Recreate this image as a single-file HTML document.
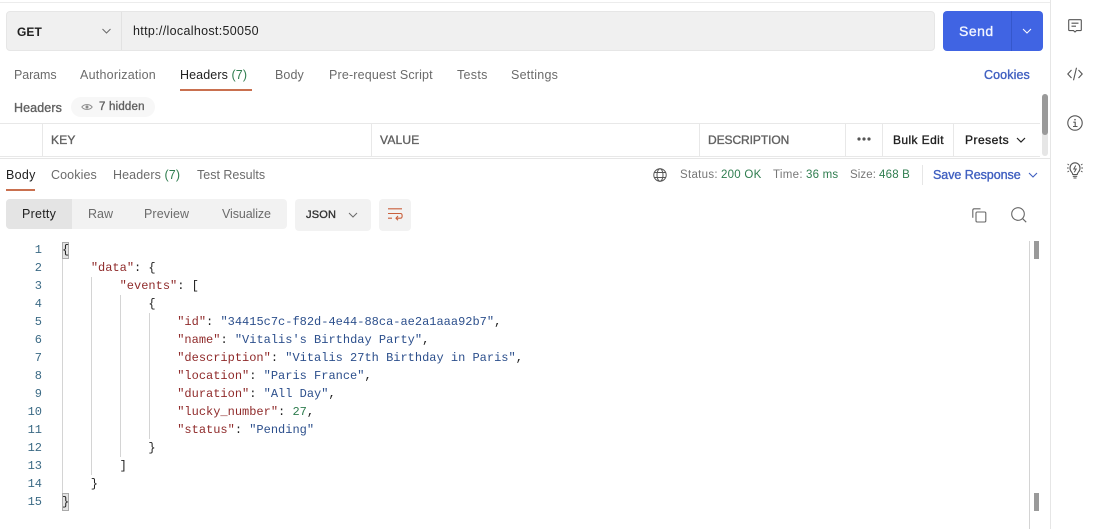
<!DOCTYPE html>
<html><head><meta charset="utf-8"><style>
html,body{margin:0;padding:0;background:#fff}
body{position:relative;width:1097px;height:529px;overflow:hidden;font-family:"Liberation Sans",sans-serif;font-size:12.5px;letter-spacing:.1px;color:#6b6b6b}
.a{position:absolute;white-space:nowrap;line-height:16px}
.r{position:absolute}
.g{color:#2f7d4f}
.d{color:#212121}
.b{font-weight:bold}
.m{-webkit-text-stroke:.35px currentColor}
svg{position:absolute;fill:none;overflow:visible}
.code{position:absolute;left:62px;top:241px;font-family:"Liberation Mono",monospace;font-size:12px;letter-spacing:0;line-height:18px;color:#212121;white-space:pre}
.nums{position:absolute;left:10px;width:32px;top:241px;text-align:right;font-family:"Liberation Mono",monospace;font-size:12px;letter-spacing:0;line-height:18px;color:#3b6a85;white-space:pre}
.k{color:#8f2a2a}.s{color:#2c4f8c}.n{color:#2f7d4f}
</style></head><body>
<!-- top line -->
<div class="r" style="left:0;top:2px;width:1050px;height:1px;background:#ececec"></div>
<div class="r" style="left:1050px;top:0;width:1px;height:529px;background:#e6e6e6"></div>
<!-- URL bar -->
<div class="r" style="left:6px;top:11px;width:929px;height:40px;background:#f0f0f0;border:1px solid #e6e6e6;box-sizing:border-box;border-radius:4px"></div>
<div class="r" style="left:121px;top:12px;width:1px;height:38px;background:#e2e2e2"></div>
<div class="a b" style="left:17px;top:24px;color:#212121;font-size:12px">GET</div>
<svg style="left:101px;top:28px" width="11" height="7"><path d="M1.500 1l4 4 4-4" stroke="#6b6b6b"/></svg>
<div class="a" style="left:133px;top:23px;color:#212121;font-size:12.5px;letter-spacing:.32px">http://localhost:50050</div>
<!-- send -->
<div class="r" style="left:943px;top:11px;width:100px;height:40px;background:#4064e3;border-radius:4px"></div>
<div class="r" style="left:1011px;top:11px;width:1px;height:40px;background:#3557cc"></div>
<div class="a m" style="left:959px;top:23px;color:#f2f5ff;font-size:14px;letter-spacing:.5px">Send</div>
<svg style="left:1022px;top:28px" width="11" height="7"><path d="M1 1l4 4 4-4" stroke="#fff"/></svg>
<!-- request tabs -->
<div class="a" style="left:14px;top:67px;letter-spacing:-.1px">Params</div>
<div class="a" style="left:80px;top:67px;letter-spacing:.23px">Authorization</div>
<div class="a d" style="left:180px;top:67px">Headers <span class="g">(7)</span></div>
<div class="r" style="left:180px;top:89px;width:72px;height:2px;background:#c9704f"></div>
<div class="a" style="left:275px;top:67px">Body</div>
<div class="a" style="left:329px;top:67px;letter-spacing:.17px">Pre-request Script</div>
<div class="a" style="left:457px;top:67px;letter-spacing:.3px">Tests</div>
<div class="a" style="left:511px;top:67px;letter-spacing:.25px">Settings</div>
<div class="a m" style="left:984px;top:67px;color:#3f5fc0;font-size:12.5px">Cookies</div>
<!-- headers row -->
<div class="a m" style="left:14px;top:100px;font-size:12.5px;color:#616161">Headers</div>
<div class="r" style="left:71px;top:97px;width:84px;height:20px;border-radius:10px;background:#f7f7f7"></div>
<svg style="left:81px;top:103px" width="12" height="8"><path d="M.8 4C3 .8 9 .8 11.200 4 9 7.200 3 7.200.8 4z" stroke="#8a8a8a"/><circle cx="6" cy="4" r="1.500" fill="#8a8a8a"/></svg>
<div class="a m" style="left:99px;top:99px;font-size:11.5px;color:#616161;letter-spacing:.2px">7 hidden</div>
<!-- table -->
<div class="r" style="left:0;top:123px;width:1040px;height:1px;background:#e8e8e8"></div>
<div class="r" style="left:0;top:156px;width:1040px;height:1px;background:#e8e8e8"></div>
<div class="r" style="left:0;top:158px;width:1050px;height:1px;background:#e6e6e6"></div>
<div class="r" style="left:42px;top:124px;width:1px;height:33px;background:#e8e8e8"></div>
<div class="r" style="left:371px;top:124px;width:1px;height:33px;background:#e8e8e8"></div>
<div class="r" style="left:699px;top:124px;width:1px;height:33px;background:#e8e8e8"></div>
<div class="r" style="left:845px;top:124px;width:1px;height:33px;background:#e8e8e8"></div>
<div class="r" style="left:882px;top:124px;width:1px;height:33px;background:#e8e8e8"></div>
<div class="r" style="left:953px;top:124px;width:1px;height:33px;background:#e8e8e8"></div>
<div class="a m" style="left:51px;top:132px;font-size:12px;color:#616161;letter-spacing:.2px">KEY</div>
<div class="a m" style="left:380px;top:132px;font-size:12px;color:#616161;letter-spacing:.2px">VALUE</div>
<div class="a m" style="left:708px;top:132px;font-size:12px;color:#616161;letter-spacing:-.07px">DESCRIPTION</div>
<svg style="left:857px;top:137px" width="14" height="4"><circle cx="2" cy="2" r="1.600" fill="#555"/><circle cx="7" cy="2" r="1.600" fill="#555"/><circle cx="12" cy="2" r="1.600" fill="#555"/></svg>
<div class="a m d" style="left:893px;top:132px;font-size:12px;letter-spacing:.4px">Bulk Edit</div>
<div class="a m d" style="left:965px;top:132px;font-size:12px;letter-spacing:.5px">Presets</div>
<svg style="left:1016px;top:137px" width="11" height="7"><path d="M1 1l4 4 4-4" stroke="#212121" stroke-width="1.200"/></svg>
<!-- scrollbar -->
<div class="r" style="left:1042px;top:94px;width:6px;height:62px;background:#e6e6e6;border-radius:3px"></div>
<div class="r" style="left:1042px;top:94px;width:6px;height:41px;background:#9a9a9a;border-radius:3px"></div>
<!-- response tabs -->
<div class="a d" style="left:6px;top:167px;letter-spacing:.3px">Body</div>
<div class="r" style="left:6px;top:189px;width:29px;height:2px;background:#c9704f"></div>
<div class="a" style="left:51px;top:167px">Cookies</div>
<div class="a" style="left:113px;top:167px">Headers <span class="g">(7)</span></div>
<div class="a" style="left:197px;top:167px;letter-spacing:0">Test Results</div>
<!-- status -->
<svg style="left:653px;top:168px" width="14" height="14" stroke="#555" stroke-width="1"><circle cx="7" cy="7" r="6.200"/><ellipse cx="7" cy="7" rx="3" ry="6.200"/><path d="M1.300 4.500h11.400M1.300 9.500h11.400"/></svg>
<div class="a" style="left:680px;top:167px;font-size:11.5px;color:#777;letter-spacing:.3px">Status:</div>
<div class="a g" style="left:721px;top:167px;font-size:11.5px;letter-spacing:.25px">200 OK</div>
<div class="a" style="left:773px;top:167px;font-size:11.5px;color:#777;letter-spacing:.3px">Time:</div>
<div class="a g" style="left:806px;top:167px;font-size:11.5px;letter-spacing:.2px">36 ms</div>
<div class="a" style="left:850px;top:167px;font-size:11.5px;color:#777">Size:</div>
<div class="a g" style="left:879px;top:167px;font-size:11.5px;letter-spacing:.2px">468 B</div>
<div class="r" style="left:922px;top:165px;width:1px;height:20px;background:#e6e6e6"></div>
<div class="a m" style="left:933px;top:167px;font-size:12.5px;color:#3f5fc0;letter-spacing:-.05px">Save Response</div>
<svg style="left:1028px;top:172px" width="11" height="7"><path d="M1 1l4 4 4-4" stroke="#3f5fc0" stroke-width="1.100"/></svg>
<!-- mode switch -->
<div class="r" style="left:6px;top:199px;width:281px;height:30px;background:#f2f2f2;border-radius:4px"></div>
<div class="r" style="left:6px;top:199px;width:66px;height:30px;background:#e4e4e4;border-radius:4px 0 0 4px"></div>
<div class="a d" style="left:22px;top:206px;letter-spacing:.25px">Pretty</div>
<div class="a" style="left:88px;top:206px;letter-spacing:0">Raw</div>
<div class="a" style="left:144px;top:206px">Preview</div>
<div class="a" style="left:222px;top:206px;letter-spacing:-.1px">Visualize</div>
<div class="r" style="left:295px;top:199px;width:76px;height:32px;background:#f2f2f2;border-radius:4px"></div>
<div class="a m" style="left:306px;top:207px;font-size:11px;color:#333;letter-spacing:.2px">JSON</div>
<svg style="left:348px;top:212px" width="11" height="7"><path d="M1 1l4 4 4-4" stroke="#6b6b6b"/></svg>
<div class="r" style="left:379px;top:199px;width:32px;height:32px;background:#f2f2f2;border-radius:4px"></div>
<svg style="left:388px;top:208px" width="15" height="13" stroke="#c9603c" stroke-width="1.100"><path d="M0 .8h14M0 5.500h12.500c2.200 0 2.200 4.700 0 4.700H8M0 10.200h4"/><path d="M10 8l-2 2.200 2 2.100"/></svg>
<!-- copy/search -->
<svg style="left:972px;top:208px" width="15" height="15" stroke="#666" stroke-width="1.100"><path d="M8.500.8H2.200Q.8.8.8 2.200v7.500"/><rect x="4" y="4" width="9.800" height="10" rx="1.200"/></svg>
<svg style="left:1011px;top:207px" width="16" height="16" stroke="#666" stroke-width="1.100"><circle cx="7" cy="7" r="6.300"/><path d="M11.800 11.800l3.400 3.400"/></svg>
<!-- code -->
<div class="nums">1
2
3
4
5
6
7
8
9
10
11
12
13
14
15</div>
<div class="r" style="left:62px;top:242px;width:7px;height:17px;background:#e4e4e4;border:1px solid #aaa;box-sizing:border-box"></div>
<div class="r" style="left:62px;top:493px;width:7px;height:18px;background:#e4e4e4;border:1px solid #aaa;box-sizing:border-box"></div>
<div class="r" style="left:62px;top:259px;width:1px;height:234px;background:#d4d4d4"></div>
<div class="r" style="left:91px;top:277px;width:1px;height:198px;background:#d4d4d4"></div>
<div class="r" style="left:120px;top:295px;width:1px;height:162px;background:#d4d4d4"></div>
<div class="r" style="left:149px;top:313px;width:1px;height:126px;background:#d4d4d4"></div>
<div class="code">{
    <span class="k">"data"</span>: {
        <span class="k">"events"</span>: [
            {
                <span class="k">"id"</span>: <span class="s">"34415c7c-f82d-4e44-88ca-ae2a1aaa92b7"</span>,
                <span class="k">"name"</span>: <span class="s">"Vitalis's Birthday Party"</span>,
                <span class="k">"description"</span>: <span class="s">"Vitalis 27th Birthday in Paris"</span>,
                <span class="k">"location"</span>: <span class="s">"Paris France"</span>,
                <span class="k">"duration"</span>: <span class="s">"All Day"</span>,
                <span class="k">"lucky_number"</span>: <span class="n">27</span>,
                <span class="k">"status"</span>: <span class="s">"Pending"</span>
            }
        ]
    }
}</div>
<!-- code scrollbars -->
<div class="r" style="left:1029px;top:241px;width:1px;height:288px;background:#d4d4d4"></div>
<div class="r" style="left:1034px;top:241px;width:5px;height:18px;background:#9a9a9a"></div>
<div class="r" style="left:1034px;top:493px;width:5px;height:18px;background:#9a9a9a"></div>
<!-- right sidebar -->
<svg style="left:1068px;top:19px" width="14" height="14" stroke="#555" stroke-width="1.100"><path d="M1.500.7h11q.8 0 .8.8v9.300q0 .8-.8.8H8.500L7 13l-1.500-1.400h-4q-.8 0-.8-.8V1.500q0-.8.8-.8z"/><path d="M3.500 4.200h7M3.500 7.200h4.500"/></svg>
<svg style="left:1067px;top:67px" width="16" height="14" stroke="#555" stroke-width="1.100"><path d="M4.500 3L.8 7l3.700 4M11.500 3l3.700 4-3.700 4M9.500.8L6.500 13.200"/></svg>
<svg style="left:1067px;top:115px" width="16" height="16" stroke="#555" stroke-width="1.100"><circle cx="8" cy="8" r="7.200"/><path d="M6.300 7.200H8.200v4.300M6 11.500h4.500"/><circle cx="8" cy="4.700" r=".8" fill="#555" stroke="none"/></svg>
<svg style="left:1067px;top:162px" width="16" height="17" stroke="#555" stroke-width="1.100"><path d="M5.800 12.500C5.800 10.500 3 9.500 3 6.200 3 3 5.300.8 8 .8s5 2.200 5 5.400c0 3.300-2.800 4.300-2.800 6.300zM5.800 14.300h4.400M6.500 16h3"/><path d="M8.700 3.500L6.800 7h2.400L7.300 10.200" stroke-width="1"/><path d="M0 6h1.700M14.300 6H16M.5 2l1.500 1M15.500 2L14 3M.5 10l1.500-1M15.500 10L14 9" stroke-width=".9"/></svg>
</body></html>
